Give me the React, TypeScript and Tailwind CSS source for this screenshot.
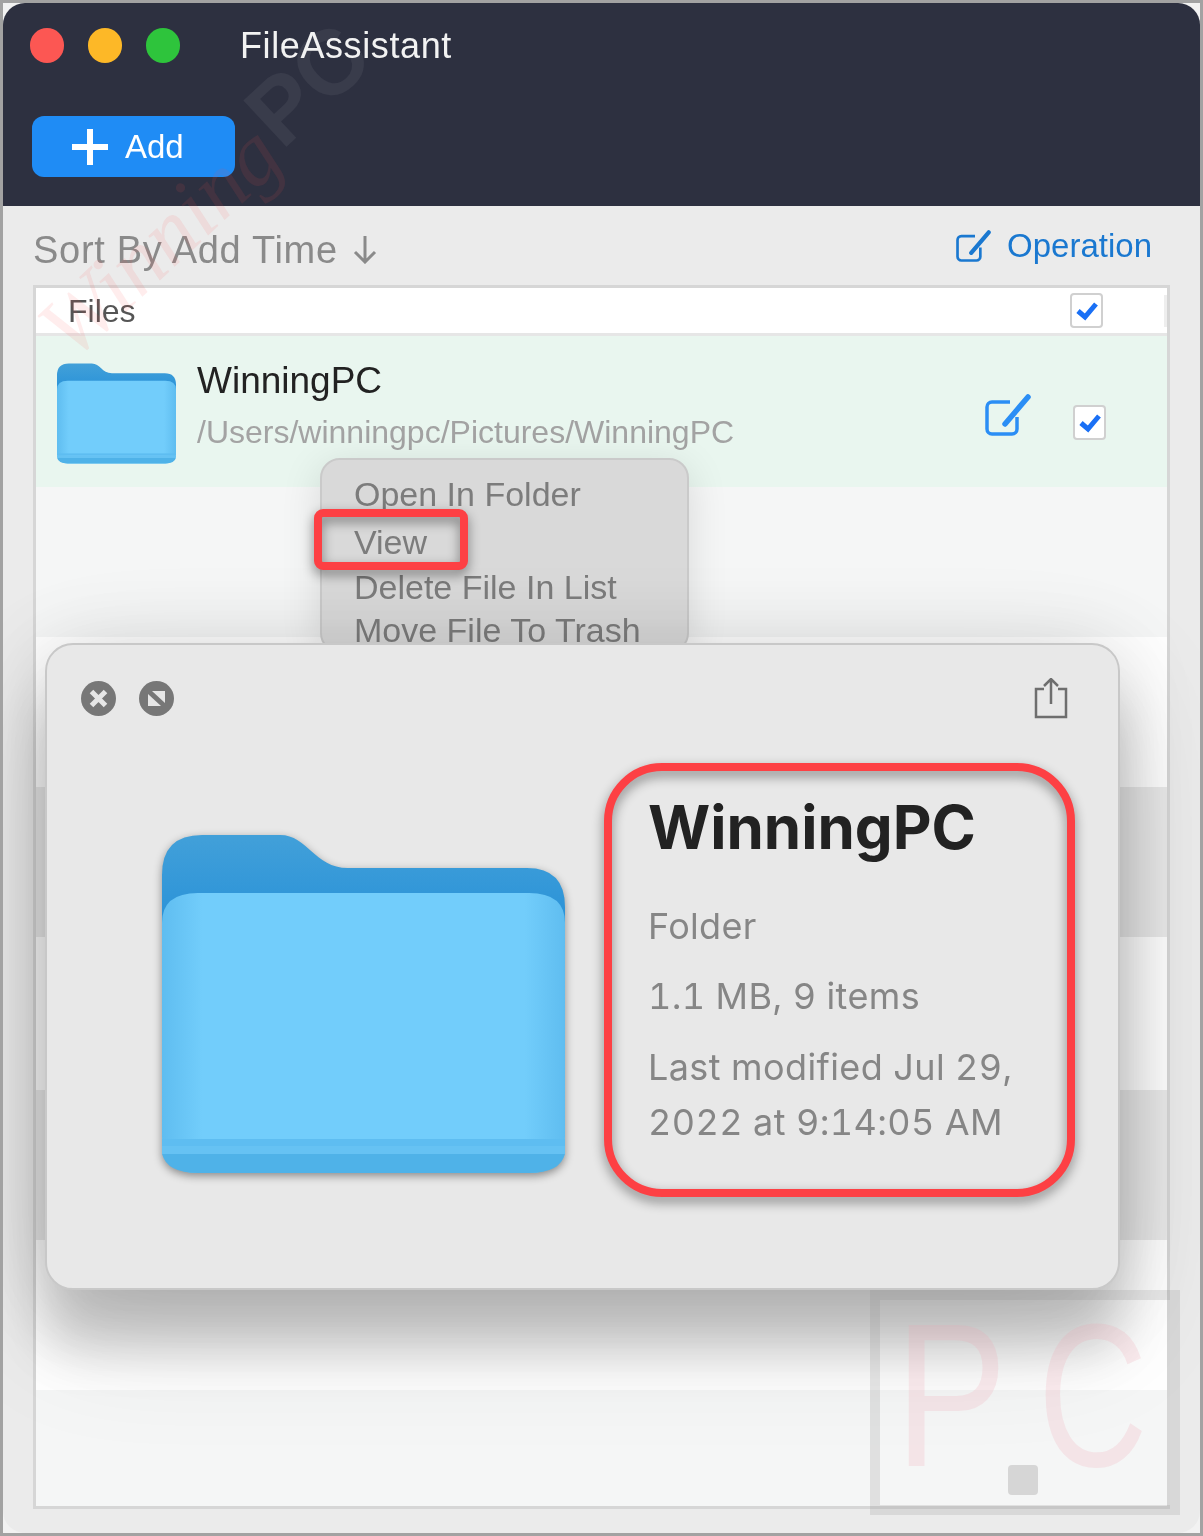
import React from "react";

const sans = "font-['Liberation_Sans',Arial,sans-serif]";

function Folder({ className }: { className: string }) {
  return (
    <svg viewBox="0 0 403 338" className={className}>
      <defs>
        <linearGradient id="folderBack" x1="0" y1="0" x2="0" y2="1">
          <stop offset="0" stopColor="#42a0d9" />
          <stop offset="0.55" stopColor="#2b93d8" />
          <stop offset="1" stopColor="#1878cc" />
        </linearGradient>
        <linearGradient id="folderFront" x1="0" y1="0" x2="1" y2="0">
          <stop offset="0" stopColor="#5fbdf0" />
          <stop offset="0.1" stopColor="#72cdfb" />
          <stop offset="0.9" stopColor="#72cdfb" />
          <stop offset="1" stopColor="#5fbdf0" />
        </linearGradient>
      </defs>
      <path
        d="M0 40 Q0 0 40 0 H118 C146 0 152 33 186 33 H365 Q403 33 403 72 V150 H0 Z"
        fill="url(#folderBack)"
      />
      <path d="M0 88 Q0 58 36 58 H367 Q403 58 403 88 V302 Q403 338 367 338 H36 Q0 338 0 302 Z" fill="url(#folderFront)" />
      <path d="M0 319 H403 Q398 338 367 338 H36 Q5 338 0 319 Z" fill="#4fb2e8" />
      <rect x="0" y="304" width="403" height="7" fill="#5ebdf1" />
      <rect x="0" y="311" width="403" height="8" fill="#66c2f3" />
    </svg>
  );
}

function EditIcon({ className }: { className: string }) {
  return (
    <svg viewBox="0 0 46 42" fill="none" stroke="currentColor" className={className}>
      <path d="M25 8 H7 a5 5 0 0 0 -5 5 V35 a5 5 0 0 0 5 5 H27 a5 5 0 0 0 5 -5 V23" strokeWidth="3.5" />
      <path d="M43 3 L20 30" strokeWidth="5.5" strokeLinecap="round" />
    </svg>
  );
}

function Checkbox() {
  return (
    <div className="flex h-[35px] w-[33px] items-center justify-center rounded-[4px] border-2 border-[#d0d0d0] bg-white">
      <svg viewBox="0 0 24 20" fill="none" className="h-[20px] w-[24px]">
        <path d="M3 10 L10 16 L21 3" stroke="#1a70f5" strokeWidth="5" />
      </svg>
    </div>
  );
}

function RedBox({ className }: { className: string }) {
  return (
    <div
      className={`pointer-events-none absolute border-solid border-[#fd4044] drop-shadow-[0_5px_6px_rgba(0,0,0,0.45)] ${className}`}
    />
  );
}

export default function App() {
  const rows = [
    "h-[150px] bg-[#f5f6f6]",
    "h-[150px] bg-white",
    "h-[150px] bg-[#ebebeb]",
    "h-[153px] bg-white",
    "h-[150px] bg-[#ebebeb]",
    "h-[150px] bg-white",
    "flex-1 bg-[#f5f6f6]",
  ];

  return (
    <div className={`relative h-[1536px] w-full overflow-hidden border-[3px] border-[#a2a2a2] bg-[#f2f2f2] blur-[0.7px] ${sans}`}>
      <div className="flex h-full flex-col overflow-hidden rounded-[22px] bg-[#ebebeb]">
        <header className="flex h-[203px] flex-col bg-[#2d3040] px-[29px]">
          <div className="flex items-center pt-[25px]">
            <div className="ml-[-2px] flex gap-[24px]">
              <span className="h-[35px] w-[34px] rounded-full bg-[#fc5753]" />
              <span className="h-[35px] w-[34px] rounded-full bg-[#fdb827]" />
              <span className="h-[35px] w-[34px] rounded-full bg-[#2ec43c]" />
            </div>
            <h1 className="ml-[60px] text-[36px] leading-[35px] tracking-[0.6px] text-[#f2f2f2]">FileAssistant</h1>
          </div>
          <button className="mt-[53px] flex h-[61px] w-[203px] items-center rounded-[12px] bg-[#1f8cf5] pl-[40px] text-[33px] text-white">
            <svg viewBox="0 0 36 36" className="h-[36px] w-[36px]" stroke="white" strokeWidth="6">
              <path d="M18 0 V36 M0 18 H36" />
            </svg>
            <span className="ml-[17px]">Add</span>
          </button>
        </header>

        <main className="flex flex-1 flex-col px-[30px]">
          <div className="flex h-[79px] items-center justify-between pr-[18px]">
            <span className="flex items-center pt-[9px] text-[38px] tracking-[0.7px] text-[#8a8a8a]">
              Sort By Add Time
              <svg viewBox="0 0 24 28" fill="none" stroke="#8a8a8a" strokeWidth="3" className="ml-[15px] h-[28px] w-[24px]">
                <path d="M12 0 V26 M2 16 L12 26 L22 16" />
              </svg>
            </span>
            <span className="flex items-center gap-[16px] text-[33px] text-[#1a78d0]">
              <EditIcon className="h-[32px] w-[35px]" />
              Operation
            </span>
          </div>

          <div className="flex h-[1224px] flex-col border-[3px] border-[#d6d6d6]">
            <div className="flex h-[48px] items-center border-b-[3px] border-[#e6e6e6] bg-white pl-[32px]">
              <span className="flex-1 text-[32px] text-[#555555]">Files</span>
              <Checkbox />
              <span className="ml-[61px] h-[32px] w-[3px] bg-[#eeeeee]" />
            </div>
            <div className="flex h-[151px] bg-[#e9f6ef] pl-[21px] pt-[27px]">
              <Folder className="h-[101px] w-[119px]" />
              <div className="-mt-[2px] ml-[21px] flex-1">
                <div className="text-[37px] leading-[40px] text-[#222222]">WinningPC</div>
                <div className="mt-[13px] text-[32px] leading-[36px] text-[#a3a3a3]">/Users/winningpc/Pictures/WinningPC</div>
              </div>
              <EditIcon className="mt-[31px] h-[42px] w-[46px] text-[#2b8ef5]" />
              <div className="ml-[42px] mr-[61px] mt-[42px]">
                <Checkbox />
              </div>
            </div>
            {rows.map((row, i) => (
              <div key={i} className={row} />
            ))}
          </div>
        </main>
      </div>

      {/* watermark */}
      <span className="pointer-events-none absolute left-[10px] top-[194px] origin-center -rotate-[43deg] font-['Liberation_Serif',serif] text-[88px] italic leading-none text-[#ff4a4a]/10">
        Winning
      </span>
      <span className="pointer-events-none absolute left-[240px] top-[35px] origin-center -rotate-[43deg] text-[92px] font-bold leading-none text-white/[0.06]">
        PC
      </span>

      {/* context menu */}
      <div className="absolute left-[317px] top-[455px] h-[195px] w-[369px] rounded-[20px] border-2 border-[#cacaca] bg-[#d9d9d9] pl-[32px] pt-[11px] text-[34px] leading-[44px] text-[#7c7c7c] shadow-[0_8px_40px_rgba(0,0,0,0.12)]">
        <div className="leading-[46px]">Open In Folder</div>
        <div className="relative leading-[50px]">
          View
          <RedBox className="-left-[40px] -top-[8px] h-[61px] w-[154px] rounded-[9px] border-[8px]" />
        </div>
        <div className="leading-[40px]">Delete File In List</div>
        <div className="leading-[46px]">Move File To Trash</div>
      </div>

      {/* quick look */}
      <div className="absolute left-[42px] top-[640px] flex h-[647px] w-[1075px] flex-col rounded-[28px] border-2 border-[#c8c8c8] bg-[#e8e8e8] shadow-[0_60px_50px_rgba(0,0,0,0.16),0_10px_80px_rgba(0,0,0,0.14),0_40px_130px_rgba(0,0,0,0.12)]">
        <div className="flex items-start justify-between pl-[34px] pr-[50px] pt-[36px]">
          <div className="flex gap-[23px]">
            <svg viewBox="0 0 35 35" className="h-[35px] w-[35px]">
              <circle cx="17.5" cy="17.5" r="17.5" fill="#777777" />
              <path d="M10.5 10.5 L24.5 24.5 M24.5 10.5 L10.5 24.5" stroke="#e6e6e6" strokeWidth="5" />
            </svg>
            <svg viewBox="0 0 35 35" className="h-[35px] w-[35px]">
              <circle cx="17.5" cy="17.5" r="17.5" fill="#777777" />
              <polygon points="13,10 26,10 26,22" fill="#e6e6e6" />
              <polygon points="9,13 9,25 22,25" fill="#e6e6e6" />
            </svg>
          </div>
          <svg viewBox="0 0 34 41" fill="none" stroke="#6e6e6e" strokeWidth="2.5" className="-mt-[3px] h-[41px] w-[34px]">
            <path d="M10 11 H2 V39 H32 V11 H24 M17 1 V26 M10 8 L17 1 L24 8" />
          </svg>
        </div>

        <div className="mt-[44px] flex items-start pl-[115px]">
          <Folder className="mt-[72px] h-[338px] w-[403px] drop-shadow-[0_3px_4px_rgba(0,0,0,0.4)]" />
          <div className="relative ml-[39px] h-[434px] w-[471px] pl-[44px] pt-[28px] font-['Inter',sans-serif]">
            <RedBox className="inset-0 rounded-[58px] border-[8px]" />
            <div className="text-[60px] font-bold leading-[72px] text-[#222222]">WinningPC</div>
            <div className="mt-[41px] text-[36px] leading-[44px] tracking-[0.3px] text-[#868686]">Folder</div>
            <div className="mt-[26px] text-[36px] leading-[44px] tracking-[0.4px] text-[#868686] tabular-nums">1.1 MB, 9 items</div>
            <div className="mt-[22px] w-[390px] text-[36px] leading-[55px] tracking-[0.4px] text-[#868686] tabular-nums">
              Last modified Jul 29, 2022 at 9:14:05 AM
            </div>
          </div>
        </div>
      </div>

      {/* logo watermark */}
      <div className="pointer-events-none absolute left-[867px] top-[1287px] h-[225px] w-[310px] border-[10px] border-[#8a8a8a]/20">
        <span className="absolute left-[15px] top-[-15px] origin-left scale-x-[0.82] text-[205px] leading-[220px] text-[#f0a0b0]/20">P</span>
        <span className="absolute left-[158px] top-[-15px] origin-left scale-x-[0.74] text-[205px] leading-[220px] text-[#f0a0b0]/20">C</span>
        <span className="absolute left-[128px] top-[165px] h-[30px] w-[30px] rounded-[4px] bg-[#d6d6d6]" />
      </div>
    </div>
  );
}
